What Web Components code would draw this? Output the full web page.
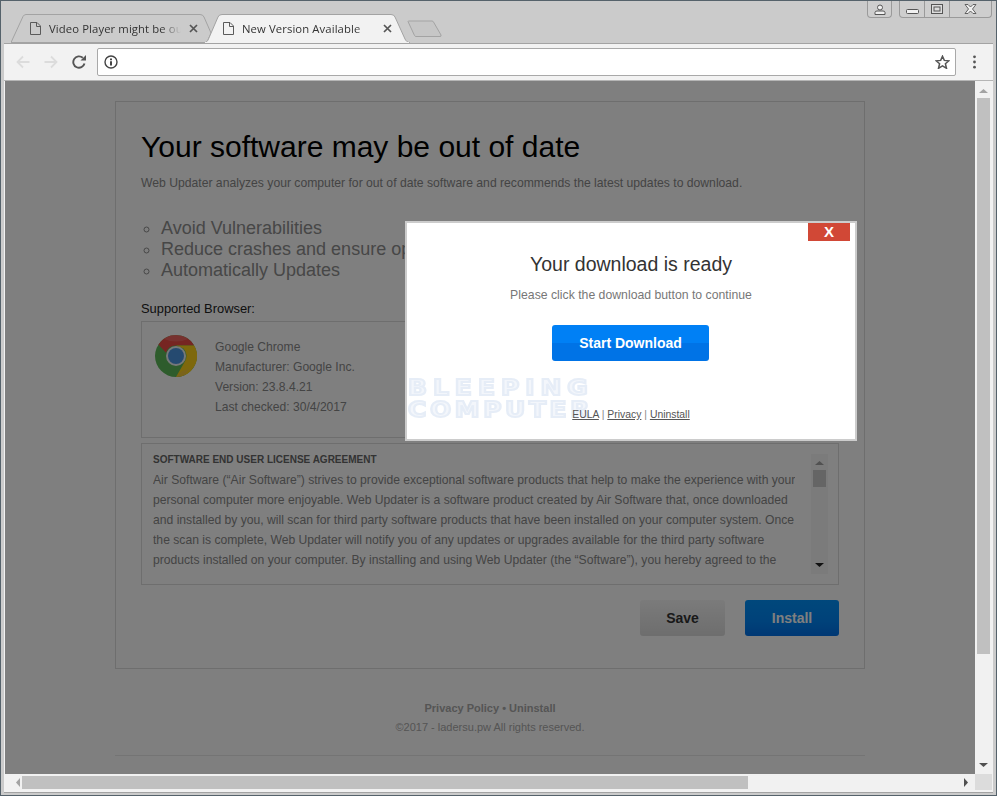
<!DOCTYPE html>
<html>
<head>
<meta charset="utf-8">
<title>New Version Available</title>
<style>
  html, body { margin: 0; height: 100%; overflow: hidden; background: #ccc; }
</style>
</head>
<body>
<browser-window>
  <browser-tab slot="tabs" label="Video Player might be out of date"></browser-tab>
  <browser-tab slot="tabs" label="New Version Available" active></browser-tab>
  <update-page></update-page>
  <download-modal slot="overlay"></download-modal>
</browser-window>

<script>
class BrowserTab extends HTMLElement {
  constructor() {
    super();
    this.shadow = this.attachShadow({ mode: "open" });
  }
  connectedCallback() {
    const active = this.hasAttribute("active");
    this.shadow.innerHTML = `
    <style>
      :host { display: block; position: relative; width: ${active ? 206 : 200}px; height: 29px; margin-right: -7px; z-index: ${active ? 2 : 1}; font: 12px "Open Sans", sans-serif; color: #333; }
      svg.shape { position: absolute; left: 0; top: 0; }
      .row { position: relative; display: flex; align-items: center; height: 28px; padding: 0 ${active ? 18 : 13}px 0 19px; gap: 8px; }
      .page { flex: none; }
      .label { flex: 1; overflow: hidden; white-space: nowrap; font-size: 11.300px; letter-spacing: .1px; padding-top: 1px; -webkit-mask-image: linear-gradient(90deg, #000 85%, transparent 100%); }
      .close { flex: none; }
    </style>
    <svg class="shape" width="${active ? 206 : 200}" height="29" viewBox="0 0 ${active ? 206 : 200} 29">
      ${active
        ? '<path d="M0 29 C3 28 3.500 27 4.500 25 L14 3 Q15 .5 18 .5 L187 .5 Q190 .5 191 3 L201 25 C202 27 203 28 206 29 Z" fill="#f2f2f2" stroke="#a3a3a3"/><path d="M1 29 H205" stroke="#f2f2f2" stroke-width="2"/>'
        : '<path d="M0 28.500 L12 2.500 Q13 .5 15 .5 L189 .5 Q192 .5 193 3 L200 19 L196 28.500 Z" fill="#cbcbcb" stroke="#a3a3a3"/>'}
    </svg>
    <div class="row">
      <svg class="page" width="11" height="13" viewBox="0 0 11 13"><path d="M.5.5H7L10.500 4V12.500H.5ZM6.500 .5V4.500H10.500" fill="none" stroke="#5a5a5a"/></svg>
      <span class="label">${this.getAttribute("label")}</span>
      <svg class="close" width="9" height="9" viewBox="0 0 9 9"><path d="M1 1L8 8M8 1L1 8" stroke="#555" stroke-width="1.700"/></svg>
    </div>`;
  }
}

class WindowControls extends HTMLElement {
  constructor() {
    super();
    this.shadow = this.attachShadow({ mode: "open" });
    this.shadow.innerHTML = `
    <style>
      :host { display: flex; gap: 7px; align-items: flex-start; }
      .btn { display: flex; height: 16px; border: 1px solid #9a9a9a; border-top: 0; border-radius: 0 0 4px 4px; background: #cecece; }
      .btn > div { display: flex; align-items: center; justify-content: center; height: 100%; }
      .btn > div + div { border-left: 1px solid #9a9a9a; }
    </style>
    <div class="btn"><div style="width:23px">
      <svg width="12" height="11" viewBox="0 0 12 11"><circle cx="6" cy="3.500" r="2.500" fill="#f0f0f0" stroke="#555"/><path d="M1 10.500V8.500Q1 7 3 7H9Q11 7 11 8.500V10.500Z" fill="#f0f0f0" stroke="#555"/></svg>
    </div></div>
    <div class="btn">
      <div style="width:24px"><svg width="13" height="6" viewBox="0 0 13 6" style="margin-top:5px"><rect x=".5" y=".5" width="12" height="4" rx="1" fill="#f0f0f0" stroke="#555"/></svg></div>
      <div style="width:24px"><svg width="12" height="10" viewBox="0 0 12 10"><rect x=".5" y=".5" width="11" height="9" fill="#ddd" stroke="#555"/><rect x="3" y="3" width="6" height="4" fill="#ddd" stroke="#555"/></svg></div>
      <div style="width:41px"><svg width="13" height="10" viewBox="0 0 13 10"><path d="M1 .5H4L6.500 3 9 .5H12L8.500 5 12 9.500H9L6.500 7 4 9.500H1L4.500 5Z" fill="#f0f0f0" stroke="#555" stroke-width=".9"/></svg></div>
    </div>`;
  }
}

class BrowserToolbar extends HTMLElement {
  constructor() {
    super();
    this.shadow = this.attachShadow({ mode: "open" });
    this.shadow.innerHTML = `
    <style>
      :host { display: flex; align-items: center; height: 36px; background: #f2f2f2; border-bottom: 1px solid #b5b5b5; box-sizing: content-box; padding: 0 0 0 12px; }
      svg { display: block; flex: none; }
      .nav { display: flex; gap: 14px; align-items: center; margin-right: 11px; }
      .omni { flex: none; width: 846px; height: 26px; background: #fff; border: 1px solid #a9a9a9; border-radius: 2px; display: flex; align-items: center; justify-content: space-between; padding: 0 5px 0 6px; }
      .menu { margin-left: 17px; }
    </style>
    <div class="nav">
      <svg width="14" height="14" viewBox="0 0 14 14"><path d="M13.500 7H1.500M7 1.500L1.500 7L7 12.500" fill="none" stroke="#dcdcdc" stroke-width="1.800"/></svg>
      <svg width="14" height="14" viewBox="0 0 14 14"><path d="M.5 7H12.500M7 1.500L12.500 7L7 12.500" fill="none" stroke="#dcdcdc" stroke-width="1.800"/></svg>
      <svg width="14" height="14" viewBox="0 0 14 14"><path d="M12.500 8.500A5.700 5.700 0 1 1 10.800 2.800" fill="none" stroke="#555" stroke-width="1.900"/><path d="M8.500 5.500H14V0Z" fill="#555"/></svg>
    </div>
    <div class="omni">
      <svg width="14" height="14" viewBox="0 0 14 14"><circle cx="7" cy="7" r="6" fill="none" stroke="#444" stroke-width="1.400"/><path d="M6 3.500H8V5.300H6ZM6 6.300H8V10.500H6Z" fill="#444"/></svg>
      <svg width="15" height="14" viewBox="0 0 15 14"><path d="M7.500 1.200L9.300 5.400 13.900 5.800 10.400 8.800 11.500 13.300 7.500 10.900 3.500 13.300 4.600 8.800 1.100 5.800 5.700 5.400Z" fill="none" stroke="#555" stroke-width="1.500"/></svg>
    </div>
    <svg class="menu" width="3" height="14" viewBox="0 0 3 14"><circle cx="1.500" cy="1.800" r="1.400" fill="#555"/><circle cx="1.500" cy="7" r="1.400" fill="#555"/><circle cx="1.500" cy="12.200" r="1.400" fill="#555"/></svg>`;
  }
}

class ScrollBar extends HTMLElement {
  constructor() {
    super();
    this.shadow = this.attachShadow({ mode: "open" });
  }
  connectedCallback() {
    const horizontal = this.getAttribute("orient") === "h";
    this.shadow.innerHTML = horizontal ? `
    <style>
      :host { display: flex; align-items: center; justify-content: space-between; height: 16px; width: 970px; background: #f1f1f1; }
      .thumb { width: 726px; height: 13px; background: #c0c0c0; margin-left: 17px; margin-right: auto; }
      svg { flex: none; }
    </style>
    <svg width="4" height="9" viewBox="0 0 4 9" style="margin-left:11px;margin-right:-15px"><path d="M4 0V9L0 4.500Z" fill="#a3a3a3"/></svg>
    <div class="thumb"></div>
    <svg width="4" height="9" viewBox="0 0 4 9" style="margin-right:7px"><path d="M0 0V9L4 4.500Z" fill="#505050"/></svg>` : `
    <style>
      :host { display: flex; flex-direction: column; align-items: center; width: 17px; background: #f1f1f1; }
      .thumb { width: 13px; height: 556px; background: #c0c0c0; margin-top: 5px; }
      svg { flex: none; }
    </style>
    <svg width="9" height="4" viewBox="0 0 9 4" style="margin-top:8px"><path d="M0 4H9L4.500 0Z" fill="#a3a3a3"/></svg>
    <div class="thumb"></div>
    <svg width="9" height="4" viewBox="0 0 9 4" style="margin-top:auto;margin-bottom:7px"><path d="M0 0H9L4.500 4Z" fill="#505050"/></svg>`;
  }
}

class BrowserWindow extends HTMLElement {
  constructor() {
    super();
    this.shadow = this.attachShadow({ mode: "open" });
    this.shadow.innerHTML = `
    <style>
      :host { display: flex; flex-direction: column; box-sizing: border-box; width: 997px; height: 796px; background: #cbcbcb; border: 1px solid #55626b; padding-left: 3px; padding-right: 3px; }
      .strip { position: relative; display: flex; align-items: flex-end; height: 42px; flex: none; }
      .tabs { display: flex; padding-left: 7px; align-items: flex-end; }
      .newtab { margin: 0 0 5px 4px; flex: none; align-self: flex-end; }
      window-controls { position: absolute; top: 0; right: 1px; }
      browser-toolbar { flex: none; border-top: 1px solid #a3a3a3; }
      .frame { flex: none; width: 989px; background: #f2f2f2; }
      .content { display: flex; height: 693px; }
      .viewport { position: relative; width: 970px; margin-left: 1px; overflow: hidden; background: #fff; }
      .dim { position: absolute; inset: 0; background: rgba(0, 0, 0, .5); }
      .bottom { display: flex; height: 16px; }
      .corner { width: 17px; background: #dcdcdc; }
      .edge { height: 2px; background: #f2f2f2; border-bottom: 1px solid #a3a3a3; }
    </style>
    <div class="strip">
      <div class="tabs"><slot name="tabs"></slot></div>
      <svg class="newtab" width="35" height="18" viewBox="0 0 35 18"><path d="M1 1.500Q1 1 2 1H25Q26 1 26.500 2L34 15Q34.500 16.500 33 16.500H9Q8 16.500 7.500 15.500Z" fill="#c6c6c6" stroke="#a3a3a3"/></svg>
      <window-controls></window-controls>
    </div>
    <div class="frame">
      <browser-toolbar></browser-toolbar>
      <div class="content">
        <div class="viewport">
          <slot></slot>
          <div class="dim"></div>
          <slot name="overlay"></slot>
        </div>
        <scroll-bar></scroll-bar>
      </div>
      <div class="bottom"><div style="width:1px"></div><scroll-bar orient="h"></scroll-bar><div class="corner"></div></div>
      <div class="edge"></div>
    </div>`;
  }
}

class ProductBox extends HTMLElement {
  constructor() {
    super();
    this.shadow = this.attachShadow({ mode: "open" });
    this.shadow.innerHTML = `
    <style>
      :host { display: flex; gap: 18px; box-sizing: border-box; height: 117px; border: 1px solid #dcdcdc; padding: 13px 13px; font-size: 12.100px; line-height: 20px; color: #888; }
      svg { flex: none; }
      .info { padding-top: 2px; }
    </style>
    <svg width="42" height="42" viewBox="0 0 42 42">
      <circle cx="21" cy="21" r="21" fill="#5cb858"/>
      <path d="M21 0A21 21 0 0 1 39.200 10.500H21A10.500 10.500 0 0 0 11 17.800L3.400 9.500A21 21 0 0 1 21 0Z" fill="#ec4a44"/>
      <path d="M21 0A21 21 0 0 1 33 4 Q21 9 9 4 A21 21 0 0 1 21 0Z" fill="#fff" opacity=".14"/>
      <path d="M39.200 10.500A21 21 0 0 1 21 42L30 26.200A10.500 10.500 0 0 0 28.500 13.500L21 10.500Z" fill="#fcd119"/>
      <path d="M21 42A21 21 0 0 0 30 40L34 34 27 36Z" fill="#f0c04a" opacity=".6"/>
      <circle cx="21" cy="21" r="10" fill="#eef1f4"/>
      <circle cx="21" cy="21" r="8" fill="#4a94e0"/>
    </svg>
    <div class="info">
      <div>Google Chrome</div>
      <div>Manufacturer: Google Inc.</div>
      <div>Version: 23.8.4.21</div>
      <div>Last checked: 30/4/2017</div>
    </div>`;
  }
}

class EulaBox extends HTMLElement {
  constructor() {
    super();
    this.shadow = this.attachShadow({ mode: "open" });
    this.shadow.innerHTML = `
    <style>
      :host { display: flex; box-sizing: border-box; height: 142px; border: 1px solid #dcdcdc; padding: 10px 10px 10px 11px; justify-content: space-between; color: #888; font-size: 12.150px; line-height: 20px; }
      .text { white-space: nowrap; overflow: hidden; margin-top: -1px; }
      h4 { margin: 0; font-size: 10px; line-height: 13px; font-weight: bold; color: #666; margin-bottom: 4px; }
      .bar { flex: none; display: flex; flex-direction: column; align-items: center; width: 17px; background: #f6f6f6; }
      .up { margin-top: 7px; }
      .thumb { width: 13px; height: 17px; background: #cbcbcb; margin-top: 5px; }
      .down { margin-top: auto; margin-bottom: 7px; }
    </style>
    <div class="text">
      <h4>SOFTWARE END USER LICENSE AGREEMENT</h4>
      Air Software (“Air Software”) strives to provide exceptional software products that help to make the experience with your<br>
      personal computer more enjoyable. Web Updater is a software product created by Air Software that, once downloaded<br>
      and installed by you, will scan for third party software products that have been installed on your computer system. Once<br>
      the scan is complete, Web Updater will notify you of any updates or upgrades available for the third party software<br>
      products installed on your computer. By installing and using Web Updater (the “Software”), you hereby agreed to the
    </div>
    <div class="bar">
      <svg class="up" width="9" height="4" viewBox="0 0 9 4"><path d="M0 4H9L4.500 0Z" fill="#a3a3a3"/></svg>
      <div class="thumb"></div>
      <svg class="down" width="9" height="4" viewBox="0 0 9 4"><path d="M0 0H9L4.500 4Z" fill="#222"/></svg>
    </div>`;
  }
}

class UpdatePage extends HTMLElement {
  constructor() {
    super();
    this.shadow = this.attachShadow({ mode: "open" });
    this.shadow.innerHTML = `
    <style>
      :host { display: block; width: 750px; margin: 20px auto 0; font-family: "Liberation Sans", Arial, sans-serif; }
      .card { box-sizing: border-box; height: 568px; border: 1px solid #dcdcdc; padding: 27px 25px 0; }
      h1 { margin: 0; font-size: 30px; line-height: 36px; font-weight: normal; color: #000; }
      .lead { margin: 10px 0 0; font-size: 12.180px; line-height: 16px; color: #888; }
      ul { margin: 27px 0 0; padding: 0 0 0 20px; list-style: circle; font-size: 18px; line-height: 21px; color: #8e8e8e; white-space: nowrap; }
      .supported { margin: 20px 0 0; font-size: 12.900px; line-height: 16px; color: #222; }
      product-box { margin-top: 4px; }
      eula-box { margin-top: 5px; }
      .actions { display: flex; justify-content: flex-end; gap: 20px; margin-top: 15px; }
      .btn { box-sizing: border-box; height: 36px; border-radius: 3px; font-size: 14px; font-weight: bold; line-height: 36px; text-align: center; }
      .save { width: 85px; background: linear-gradient(#f6f6f6, #dcdcdc); color: #333; }
      .install { width: 94px; background: linear-gradient(#0090f8 0, #0084f4 60%, #0070e8 100%); color: #fff; }
      footer { text-align: center; font-size: 11px; color: #aaa; padding-top: 32px; }
      footer b { display: block; line-height: 14px; }
      footer span { display: block; margin-top: 5px; line-height: 14px; }
      hr { border: 0; border-top: 1px solid #e8e8e8; margin: 21px 0 0; }
    </style>
    <div class="card">
      <h1>Your software may be out of date</h1>
      <p class="lead">Web Updater analyzes your computer for out of date software and recommends the latest updates to download.</p>
      <ul>
        <li>Avoid Vulnerabilities</li>
        <li>Reduce crashes and ensure optimal performance</li>
        <li>Automatically Updates</li>
      </ul>
      <p class="supported">Supported Browser:</p>
      <product-box></product-box>
      <eula-box></eula-box>
      <div class="actions">
        <div class="btn save">Save</div>
        <div class="btn install">Install</div>
      </div>
    </div>
    <footer>
      <b>Privacy Policy • Uninstall</b>
      <span>©2017 - ladersu.pw All rights reserved.</span>
      <hr>
    </footer>`;
  }
}

class DownloadModal extends HTMLElement {
  constructor() {
    super();
    this.shadow = this.attachShadow({ mode: "open" });
    this.shadow.innerHTML = `
    <style>
      :host { position: absolute; left: 400px; top: 140px; box-sizing: border-box; width: 452px; height: 220px; background: #fff; border: 2px solid #ccc; display: flex; flex-direction: column; align-items: center; font-family: "Liberation Sans", Arial, sans-serif; overflow: hidden; }
      .close { position: absolute; top: 0; right: 5px; width: 42px; height: 18px; background: #d14836; color: #fff; font-size: 15px; font-weight: bold; line-height: 18px; text-align: center; }
      h2 { margin: 28px 0 0; font-size: 19.500px; line-height: 26px; font-weight: normal; color: #333; }
      p { margin: 10px 0 0; font-size: 12.250px; line-height: 16px; color: #777; }
      .start { margin: 22px 1px 0 0; width: 157px; height: 36px; border-radius: 3px; background: linear-gradient(#0080f5 50%, #0073e6 50%); color: #fff; font-size: 14px; font-weight: bold; line-height: 36px; text-align: center; }
      .links { margin-top: 48px; font-size: 10.400px; line-height: 12px; color: #888; position: relative; }
      .links a { color: #555; text-decoration: underline; }
      .mark { position: absolute; left: 1px; top: 154px; font: bold 21px/22px "DejaVu Sans", sans-serif; color: #f3f6fb; -webkit-text-stroke: 2px #e6edf7; white-space: nowrap; transform: scaleX(1.190); transform-origin: 0 0; }
      .mark div:first-child { letter-spacing: 5px; }
      .mark div:last-child { letter-spacing: 3px; }
    </style>
    <div class="mark"><div>BLEEPING</div><div>COMPUTER</div></div>
    <div class="close">X</div>
    <h2>Your download is ready</h2>
    <p>Please click the download button to continue</p>
    <div class="start">Start Download</div>
    <div class="links"><a>EULA</a> | <a>Privacy</a> | <a>Uninstall</a></div>`;
  }
}

customElements.define("browser-tab", BrowserTab);
customElements.define("window-controls", WindowControls);
customElements.define("browser-toolbar", BrowserToolbar);
customElements.define("scroll-bar", ScrollBar);
customElements.define("browser-window", BrowserWindow);
customElements.define("product-box", ProductBox);
customElements.define("eula-box", EulaBox);
customElements.define("update-page", UpdatePage);
customElements.define("download-modal", DownloadModal);
</script>
</body>
</html>
